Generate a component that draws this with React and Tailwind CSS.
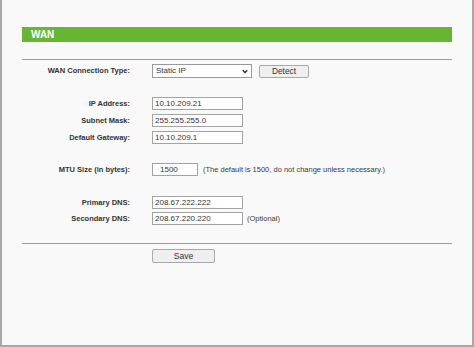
import React from 'react';

const font = { fontFamily: '"Liberation Sans", Arial, sans-serif' };

const Label = ({ children }) => (
  <div className="w-[108px] shrink-0 text-right text-[7.5px] font-bold text-[#333]">{children}</div>
);

const TextBox = ({ value, w = 'w-[91px]', pad = 'px-[2px]' }) => (
  <input
    readOnly
    value={value}
    className={`${w} ${pad} h-[13px] border border-[#a3a3a3] bg-white text-[8px] leading-none text-[#333] outline-none`}
  />
);

const Row = ({ label, children }) => (
  <div className="flex items-center h-[13px]">
    <Label>{label}</Label>
    <div className="ml-[22px] flex items-center">{children}</div>
  </div>
);

const App = () => {
  return (
    <div
      style={font}
      className="h-[347px] w-[474px] bg-[#f9f9f9] border-l-2 border-r-2 border-b-2 border-[#a8a8a8] px-[20px] pt-[27px]"
    >
      {/* Title bar */}
      <div className="h-[15px] bg-[#66b634] flex items-center pl-[9px]">
        <span className="text-[10px] font-bold text-white leading-none">WAN</span>
      </div>

      <div className="mt-[17px] h-[1px] bg-[#8da69b]" />

      {/* Connection type */}
      <div className="mt-[4px] flex items-center h-[14px]">
        <Label>WAN Connection Type:</Label>
        <div className="ml-[22px] flex items-center">
          <div className="relative w-[100px] h-[14px] border border-[#9a9a9a] bg-white flex items-center pl-[3px] text-[8px] text-[#333]">
            Static IP
            <svg className="absolute right-[3px] top-[4px]" width="6" height="5" viewBox="0 0 6 5">
              <path d="M0.8 1.2 L3 3.6 L5.2 1.2" fill="none" stroke="#222" strokeWidth="1.3" />
            </svg>
          </div>
          <button className="ml-[7px] w-[50px] h-[13px] border border-[#a8a8a8] rounded-[2px] bg-[#efefef] text-[8.3px] text-[#333] leading-none">
            Detect
          </button>
        </div>
      </div>

      {/* Addresses */}
      <div className="mt-[19px] flex flex-col gap-[4px]">
        <Row label="IP Address:"><TextBox value="10.10.209.21" /></Row>
        <Row label="Subnet Mask:"><TextBox value="255.255.255.0" /></Row>
        <Row label="Default Gateway:"><TextBox value="10.10.209.1" /></Row>
      </div>

      {/* MTU */}
      <div className="mt-[19px]">
        <Row label="MTU Size (in bytes):">
          <TextBox value="1500" w="w-[46px]" pad="pl-[7px] pr-[2px]" />
          <span className="ml-[5px] text-[7.5px] text-[#3a3a3a] whitespace-nowrap">
            (The default is 1500, do not change unless necessary.)
          </span>
        </Row>
      </div>

      {/* DNS */}
      <div className="mt-[20px] flex flex-col gap-[3px]">
        <Row label="Primary DNS:"><TextBox value="208.67.222.222" /></Row>
        <Row label="Secondary DNS:">
          <TextBox value="208.67.220.220" />
          <span className="ml-[4px] text-[7.5px] text-[#3a3a3a]">(Optional)</span>
        </Row>
      </div>

      <div className="mt-[18px] h-[1px] bg-[#8da69b]" />

      <div className="mt-[5px] flex">
        <div className="w-[108px] shrink-0" />
        <button className="ml-[22px] w-[63px] h-[14px] border border-[#a8a8a8] rounded-[2px] bg-[#efefef] text-[8.5px] text-[#333] leading-none">
          Save
        </button>
      </div>
    </div>
  );
};

export default App;
